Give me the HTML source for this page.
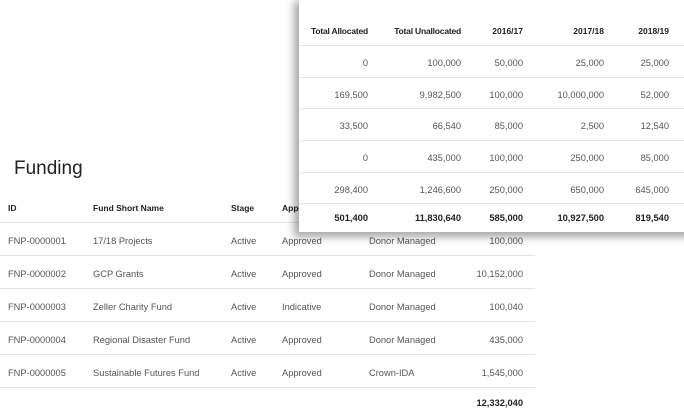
<!DOCTYPE html>
<html><head><meta charset="utf-8"><style>
*{margin:0;padding:0;box-sizing:border-box}
body{width:684px;height:414px;overflow:hidden;background:#fff;font-family:"Liberation Sans",sans-serif;position:relative;color:#555}
.t{position:absolute;font-size:9.3px;white-space:nowrap;line-height:12px;margin-top:2px}
.b{font-weight:bold;color:#222;font-size:8.5px}
.s{letter-spacing:-0.2px}
.r{text-align:right}
.ln{position:absolute;height:1px;background:#e4e4e4}
h1{position:absolute;left:14px;top:158px;font-size:19px;font-weight:normal;color:#222}
#pop{position:absolute;left:299px;top:0;width:400px;height:232px;background:#fff;box-shadow:-3px 3px 8px 2px rgba(0,0,0,.35)}
</style></head><body>
<h1>Funding</h1>
<div class="t b" style="left:8px;top:200px">ID</div>
<div class="t b" style="left:93px;top:200px">Fund Short Name</div>
<div class="t b" style="left:231px;top:200px">Stage</div>
<div class="t b" style="left:282px;top:200px">Approval</div>
<div class="ln" style="left:0;top:222px;width:535px"></div>

<div class="t" style="left:8px;top:233px">FNP-0000001</div><div class="t" style="left:93px;top:233px">17/18 Projects</div><div class="t" style="left:231px;top:233px">Active</div><div class="t" style="left:282px;top:233px">Approved</div><div class="t" style="left:369px;top:233px">Donor Managed</div><div class="t r" style="right:161px;top:233px">100,000</div>
<div class="ln" style="left:0;top:255px;width:535px"></div>
<div class="t" style="left:8px;top:266px">FNP-0000002</div><div class="t" style="left:93px;top:266px">GCP Grants</div><div class="t" style="left:231px;top:266px">Active</div><div class="t" style="left:282px;top:266px">Approved</div><div class="t" style="left:369px;top:266px">Donor Managed</div><div class="t r" style="right:161px;top:266px">10,152,000</div>
<div class="ln" style="left:0;top:288px;width:535px"></div>
<div class="t" style="left:8px;top:299px">FNP-0000003</div><div class="t" style="left:93px;top:299px">Zeller Charity Fund</div><div class="t" style="left:231px;top:299px">Active</div><div class="t" style="left:282px;top:299px">Indicative</div><div class="t" style="left:369px;top:299px">Donor Managed</div><div class="t r" style="right:161px;top:299px">100,040</div>
<div class="ln" style="left:0;top:321px;width:535px"></div>
<div class="t" style="left:8px;top:332px">FNP-0000004</div><div class="t" style="left:93px;top:332px">Regional Disaster Fund</div><div class="t" style="left:231px;top:332px">Active</div><div class="t" style="left:282px;top:332px">Approved</div><div class="t" style="left:369px;top:332px">Donor Managed</div><div class="t r" style="right:161px;top:332px">435,000</div>
<div class="ln" style="left:0;top:354px;width:535px"></div>
<div class="t" style="left:8px;top:365px">FNP-0000005</div><div class="t" style="left:93px;top:365px">Sustainable Futures Fund</div><div class="t" style="left:231px;top:365px">Active</div><div class="t" style="left:282px;top:365px">Approved</div><div class="t" style="left:369px;top:365px">Crown-IDA</div><div class="t r" style="right:161px;top:365px">1,545,000</div>
<div class="ln" style="left:0;top:387px;width:535px"></div>
<div class="t b r" style="right:161px;top:395px;font-size:9.3px">12,332,040</div>

<div id="pop"></div>
<div class="t b r s" style="right:316px;top:23px">Total Allocated</div>
<div class="t b r s" style="right:223px;top:23px">Total Unallocated</div>
<div class="t b r" style="right:161px;top:23px">2016/17</div>
<div class="t b r" style="right:80px;top:23px">2017/18</div>
<div class="t b r" style="right:15px;top:23px">2018/19</div>
<div class="ln" style="left:299px;top:45px;width:385px"></div>

<div class="t r" style="right:316px;top:55px">0</div><div class="t r" style="right:223px;top:55px">100,000</div><div class="t r" style="right:161px;top:55px">50,000</div><div class="t r" style="right:80px;top:55px">25,000</div><div class="t r" style="right:15px;top:55px">25,000</div>
<div class="ln" style="left:299px;top:77px;width:385px"></div>
<div class="t r" style="right:316px;top:87px">169,500</div><div class="t r" style="right:223px;top:87px">9,982,500</div><div class="t r" style="right:161px;top:87px">100,000</div><div class="t r" style="right:80px;top:87px">10,000,000</div><div class="t r" style="right:15px;top:87px">52,000</div>
<div class="ln" style="left:299px;top:108px;width:385px"></div>
<div class="t r" style="right:316px;top:118px">33,500</div><div class="t r" style="right:223px;top:118px">66,540</div><div class="t r" style="right:161px;top:118px">85,000</div><div class="t r" style="right:80px;top:118px">2,500</div><div class="t r" style="right:15px;top:118px">12,540</div>
<div class="ln" style="left:299px;top:140px;width:385px"></div>
<div class="t r" style="right:316px;top:150px">0</div><div class="t r" style="right:223px;top:150px">435,000</div><div class="t r" style="right:161px;top:150px">100,000</div><div class="t r" style="right:80px;top:150px">250,000</div><div class="t r" style="right:15px;top:150px">85,000</div>
<div class="ln" style="left:299px;top:172px;width:385px"></div>
<div class="t r" style="right:316px;top:182px">298,400</div><div class="t r" style="right:223px;top:182px">1,246,600</div><div class="t r" style="right:161px;top:182px">250,000</div><div class="t r" style="right:80px;top:182px">650,000</div><div class="t r" style="right:15px;top:182px">645,000</div>
<div class="ln" style="left:299px;top:203px;width:385px"></div>
<div class="t b r" style="right:316px;top:210px;font-size:9.3px">501,400</div><div class="t b r" style="right:223px;top:210px;font-size:9.3px">11,830,640</div><div class="t b r" style="right:161px;top:210px;font-size:9.3px">585,000</div><div class="t b r" style="right:80px;top:210px;font-size:9.3px">10,927,500</div><div class="t b r" style="right:15px;top:210px;font-size:9.3px">819,540</div>
</body></html>
